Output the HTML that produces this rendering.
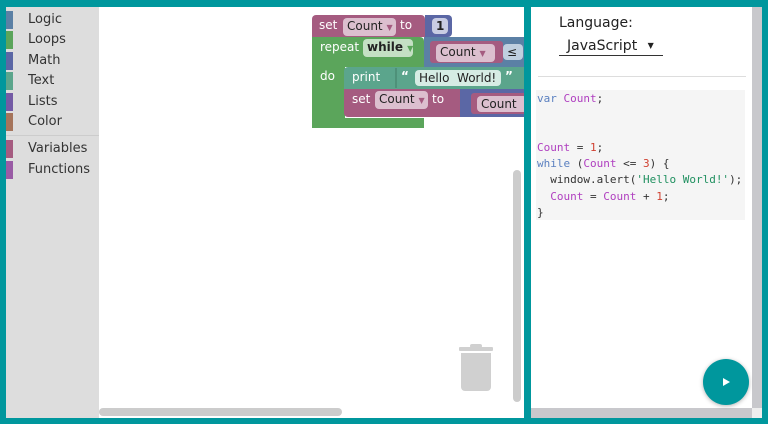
<!DOCTYPE html>
<html><head><style>
*{margin:0;padding:0;box-sizing:border-box;white-space:nowrap}
body{width:768px;height:424px;background:#00979d;position:relative;overflow:hidden;font-family:"Liberation Sans","DejaVu Sans",sans-serif}
.a{position:absolute}
.tb{left:6px;top:7px;width:93px;height:411px;background:#dddddd}
.cat{position:absolute;left:0;width:93px;height:20px;font-size:13px;color:#333;line-height:20px;padding-left:22px;font-family:"DejaVu Sans",sans-serif}
.cat i{position:absolute;left:0;top:1px;width:7px;height:18px}
.ws{left:99px;top:7px;width:425px;height:411px;background:#fff;overflow:hidden}
.blk{position:absolute;color:#fff;font-family:"DejaVu Sans",sans-serif;font-size:12px}
.f{position:absolute;border-radius:4px;color:#222;font-size:12px;font-family:"DejaVu Sans",sans-serif;line-height:16px;padding-left:4px;overflow:hidden}
.code{font-family:"DejaVu Sans Mono","Liberation Mono",monospace;font-size:11px;line-height:16.3px;color:#333}
</style></head><body>
<div class="a tb">
<div class="cat" style="top:3px"><i style="background:#5b80a5"></i>Logic</div>
<div class="cat" style="top:23px"><i style="background:#5ba55b"></i>Loops</div>
<div class="cat" style="top:44px"><i style="background:#5b67a5"></i>Math</div>
<div class="cat" style="top:64px"><i style="background:#5ba58c"></i>Text</div>
<div class="cat" style="top:85px"><i style="background:#745ba5"></i>Lists</div>
<div class="cat" style="top:105px"><i style="background:#a5745b"></i>Color</div>
<div class="a" style="left:0;top:128px;width:93px;height:1px;background:#ccc"></div>
<div class="cat" style="top:132px"><i style="background:#a55b80"></i>Variables</div>
<div class="cat" style="top:153px"><i style="background:#995ba5"></i>Functions</div>
</div>
<div class="a ws">
<div class="blk" style="left:213px;top:30px;width:112px;height:30px;background:#5ba55b;border-radius:0 4px 0 0"></div>
<div class="blk" style="left:213px;top:60px;width:33px;height:61px;background:#5ba55b;border-radius:0 0 0 5px"></div>
<div class="blk" style="left:213px;top:111px;width:112px;height:10px;background:#5ba55b"></div>
<div class="blk" style="left:221px;top:33px">repeat</div>
<div class="f" style="left:264px;top:32px;width:50px;background:#c4e0c4;font-weight:bold">while <span style="color:#5ba55b;font-size:8px;font-weight:normal">▼</span></div>
<div class="blk" style="left:221px;top:62px">do</div>
<div class="blk" style="left:325px;top:30px;width:110px;height:30px;background:#5b80a5"></div>
<div class="blk" style="left:331px;top:34px;width:73px;height:22px;background:#a55b80;border-radius:3px"></div>
<div class="f" style="left:337px;top:37px;width:59px;background:#dcbfcf">Count <span style="color:#a55b80;font-size:8px">▼</span></div>
<div class="f" style="left:404px;top:37px;width:20px;background:#bfcfdf">≤</div>
<div class="blk" style="left:213px;top:8px;width:113px;height:22px;background:#a55b80;border-radius:4px 4px 0 0"></div>
<div class="blk" style="left:220px;top:11px">set</div>
<div class="f" style="left:244px;top:11px;width:53px;background:#dcbfcf">Count <span style="color:#a55b80;font-size:8px">▼</span></div>
<div class="blk" style="left:301px;top:11px">to</div>
<div class="blk" style="left:326px;top:8px;width:27px;height:22px;background:#5b67a5;border-radius:0 4px 4px 0"></div>
<div class="f" style="left:333px;top:11px;width:16px;background:#c9cde3;font-weight:bold">1</div>
<div class="blk" style="left:245px;top:60px;width:200px;height:22px;background:#5ba58c;border-radius:4px 0 0 0"></div>
<div class="blk" style="left:253px;top:63px">print</div>
<div class="blk" style="left:296px;top:61px;width:2px;height:20px;background:#4e9179"></div>
<div class="blk" style="left:302px;top:62px;font-weight:bold">“</div>
<div class="f" style="left:316px;top:63px;width:86px;background:#d6ece4">Hello&nbsp; World!</div>
<div class="blk" style="left:406px;top:62px;font-weight:bold">”</div>
<div class="blk" style="left:245px;top:82px;width:116px;height:28px;background:#a55b80;border-radius:0 0 0 4px"></div>
<div class="blk" style="left:253px;top:85px">set</div>
<div class="f" style="left:276px;top:84px;width:53px;background:#dcbfcf">Count <span style="color:#a55b80;font-size:8px">▼</span></div>
<div class="blk" style="left:333px;top:85px">to</div>
<div class="blk" style="left:361px;top:82px;width:70px;height:28px;background:#5b67a5"></div>
<div class="blk" style="left:372px;top:86px;width:60px;height:21px;background:#a55b80;border-radius:3px"></div>
<div class="f" style="left:378px;top:89px;width:50px;background:#dcbfcf">Count</div>
<div class="a" style="left:414px;top:163px;width:8px;height:232px;background:#ccc;border-radius:4px"></div>
<div class="a" style="left:0;top:401px;width:243px;height:8px;background:#ccc;border-radius:4px"></div>
<div class="a" style="left:360px;top:340px;width:34px;height:4px;background:#d0d0d0;border-radius:1px"></div>
<div class="a" style="left:371px;top:337px;width:12px;height:4px;background:#d0d0d0;border-radius:2px"></div>
<div class="a" style="left:362px;top:346px;width:30px;height:38px;background:#d0d0d0;border-radius:0 0 4px 4px"></div>
</div>
<div class="a" style="left:531px;top:7px;width:231px;height:411px;background:#fff">
<div class="a" style="left:28px;top:8px;font-size:14px;color:#222;font-family:'DejaVu Sans',sans-serif">Language:</div>
<div class="a" style="left:28px;top:31px;width:104px;height:18px;border-bottom:1px solid #333;font-size:14px;color:#222;font-family:'DejaVu Sans',sans-serif;padding-left:8px">JavaScript <span style="font-size:8px;margin-left:6px;vertical-align:2px">▼</span></div>
<div class="a" style="left:7px;top:69px;width:208px;height:1px;background:#ddd"></div>
<div class="a code" style="left:5px;top:83px;width:209px;height:130px;background:#f5f5f5;padding:1px 1px">
<div><span style="color:#5b80c0">var</span> <span style="color:#b040c0">Count</span>;</div>
<div>&nbsp;</div><div>&nbsp;</div>
<div><span style="color:#b040c0">Count</span> = <span style="color:#d04030">1</span>;</div>
<div><span style="color:#5b80c0">while</span> (<span style="color:#b040c0">Count</span> &lt;= <span style="color:#d04030">3</span>) {</div>
<div>&nbsp; window.alert(<span style="color:#209060">'Hello World!'</span>);</div>
<div>&nbsp; <span style="color:#b040c0">Count</span> = <span style="color:#b040c0">Count</span> + <span style="color:#d04030">1</span>;</div>
<div>}</div>
</div>
<div class="a" style="left:221px;top:0;width:10px;height:401px;background:#c8c8cc"></div>
<div class="a" style="left:0;top:401px;width:221px;height:10px;background:#c8c8cc"></div>
<div class="a" style="left:221px;top:401px;width:10px;height:10px;background:#eee"></div>
<div class="a" style="left:172px;top:352px;width:46px;height:46px;border-radius:50%;background:#00979d;box-shadow:0 1px 4px rgba(0,0,0,.3)"></div>
<svg class="a" style="left:189px;top:369px" width="12" height="12"><path d="M3 2 L10 6 L3 10 Z" fill="#fff"/></svg>
</div>
</body></html>
